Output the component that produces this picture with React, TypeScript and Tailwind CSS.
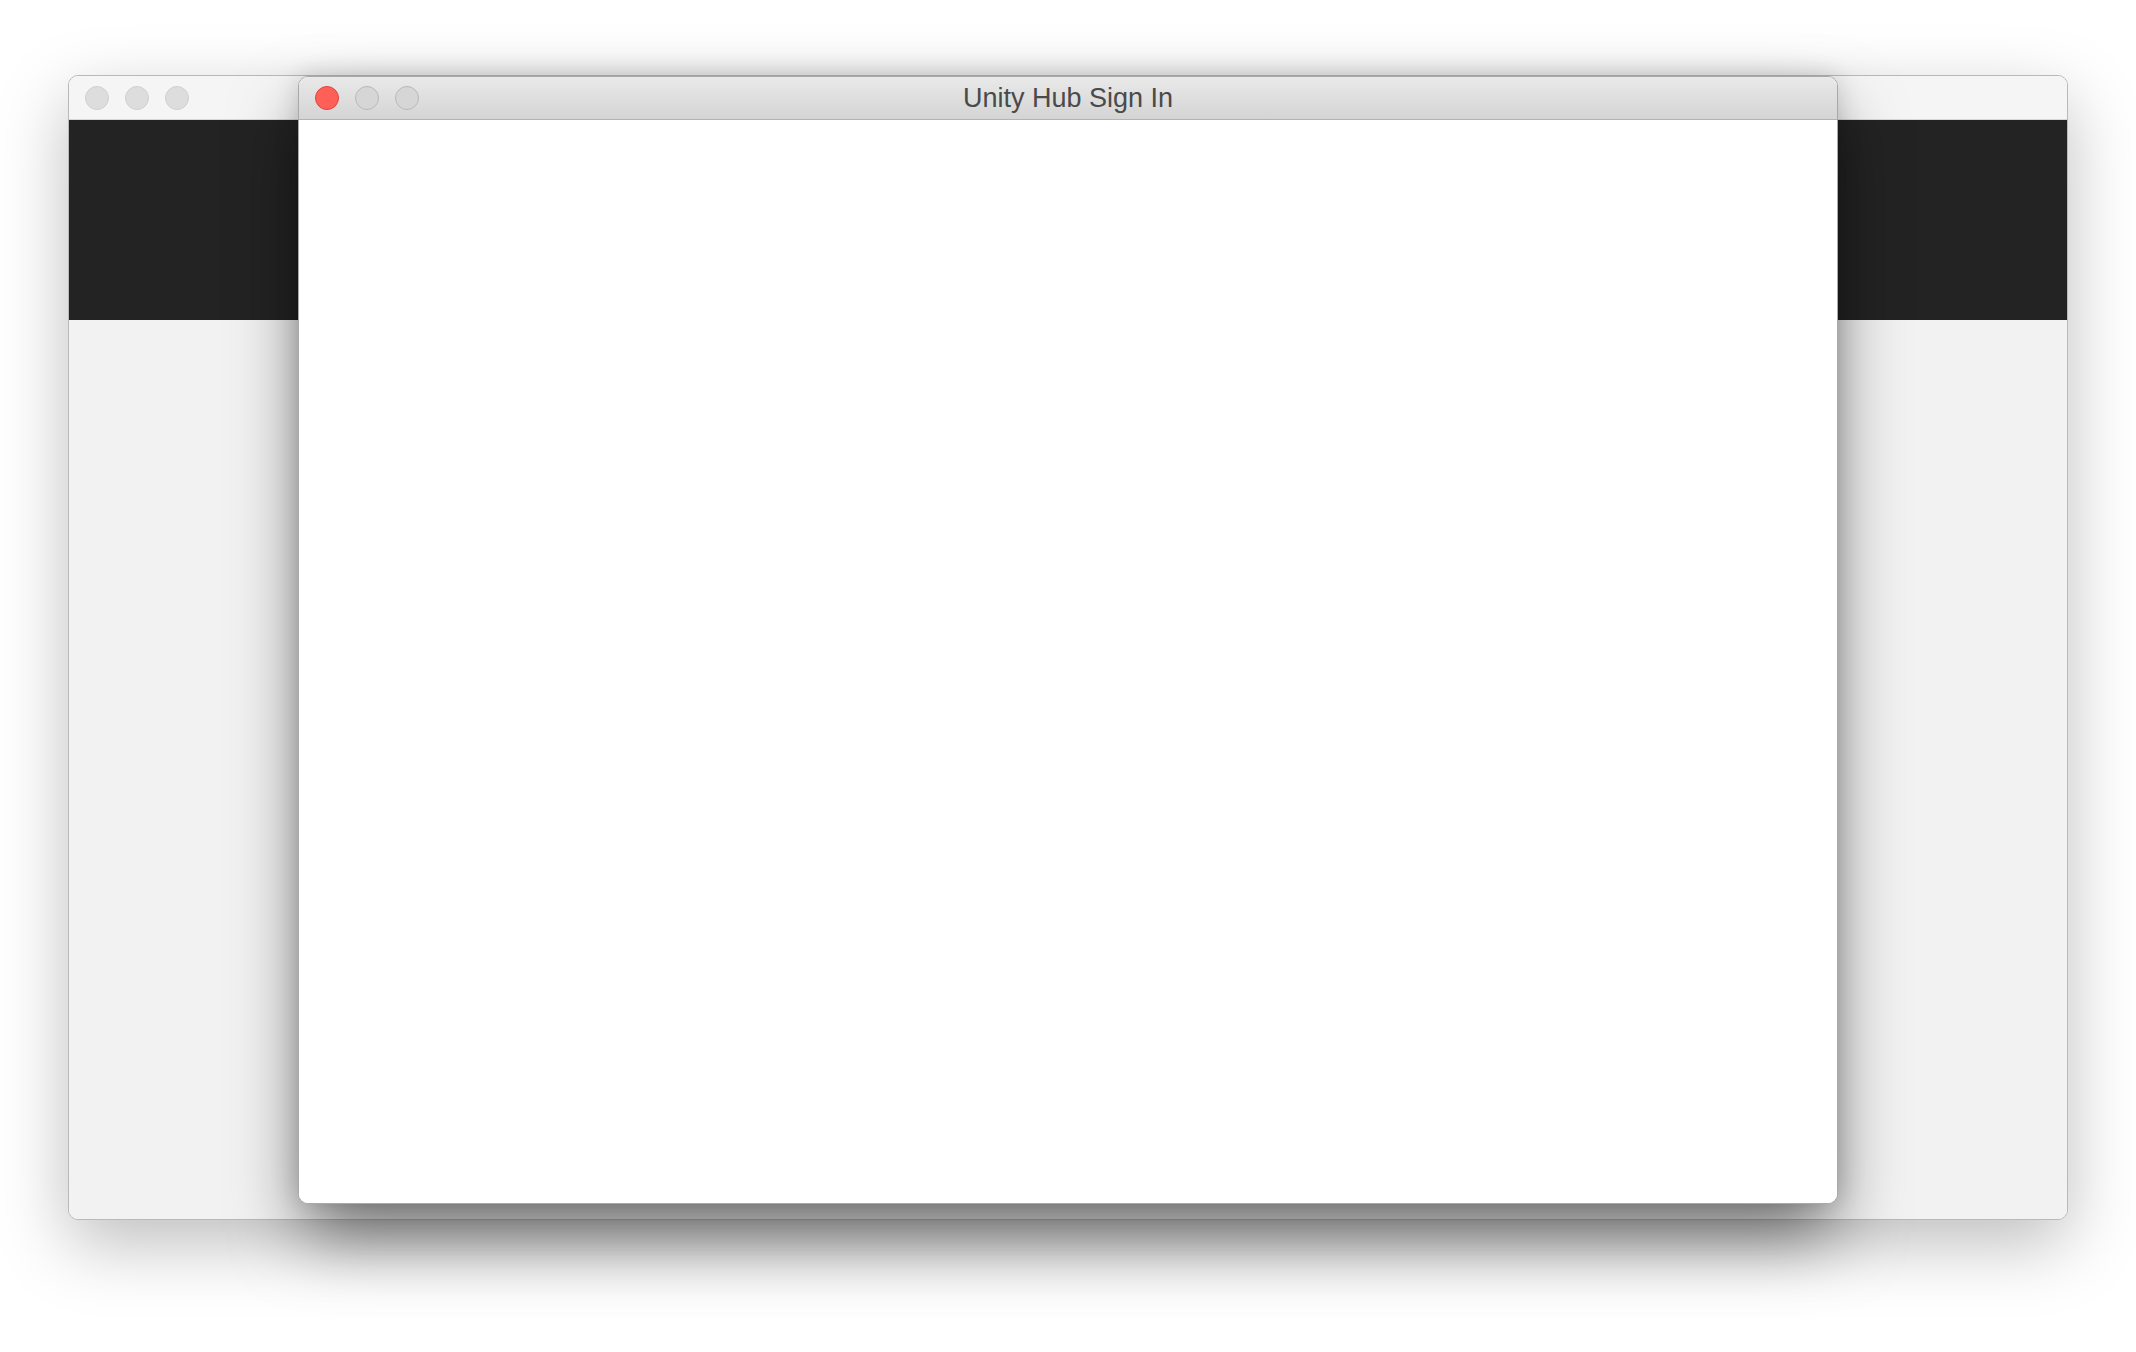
import React from "react";

function Light({ color, border }: { color: string; border: string }) {
  return (
    <span
      className="block h-[24px] w-[24px] rounded-full border"
      style={{ backgroundColor: color, borderColor: border }}
    />
  );
}

export default function App() {
  return (
    <div
      className="relative h-[1352px] w-[2136px] overflow-hidden bg-white"
      style={{ fontFamily: '"Liberation Sans", Arial, sans-serif' }}
    >
      {/* Hub main window, inactive, behind */}
      <div className="absolute left-[68px] top-[75px] flex h-[1145px] w-[2000px] flex-col overflow-hidden rounded-[10px] border border-[#b9b9b9] bg-[#f2f2f2] shadow-[0_24px_70px_rgba(0,0,0,0.26)]">
        <div className="flex h-[44px] shrink-0 items-center gap-[16px] border-b border-[#d6d6d6] bg-[#f5f5f5] pl-[16px]">
          <Light color="#dddddd" border="#d0d0d0" />
          <Light color="#dddddd" border="#d0d0d0" />
          <Light color="#dddddd" border="#d0d0d0" />
        </div>
        <div className="h-[200px] shrink-0 bg-[#232323]" />
        <div className="flex-1 bg-[#f2f2f2]" />
      </div>

      {/* Sign-in window, active, in front */}
      <div className="absolute left-[298px] top-[76px] flex h-[1128px] w-[1540px] flex-col overflow-hidden rounded-[10px] border border-[#a9a9a9] bg-white shadow-[0_34px_70px_-6px_rgba(0,0,0,0.55),0_0_24px_rgba(0,0,0,0.14)]">
        <div className="relative flex h-[43px] shrink-0 items-center border-b border-[#b3b3b3] bg-gradient-to-b from-[#e9e9e9] to-[#d4d4d4]">
          <div className="flex items-center gap-[16px] pl-[16px]">
            <Light color="#fe5f57" border="#e2443c" />
            <Light color="#d6d6d6" border="#b8b8b8" />
            <Light color="#d6d6d6" border="#b8b8b8" />
          </div>
          <div className="pointer-events-none absolute inset-0 flex items-center justify-center">
            <span className="text-[27px] leading-none text-[#4a4a4a]">Unity Hub Sign In</span>
          </div>
        </div>
        <div className="flex-1 bg-white" />
      </div>
    </div>
  );
}
